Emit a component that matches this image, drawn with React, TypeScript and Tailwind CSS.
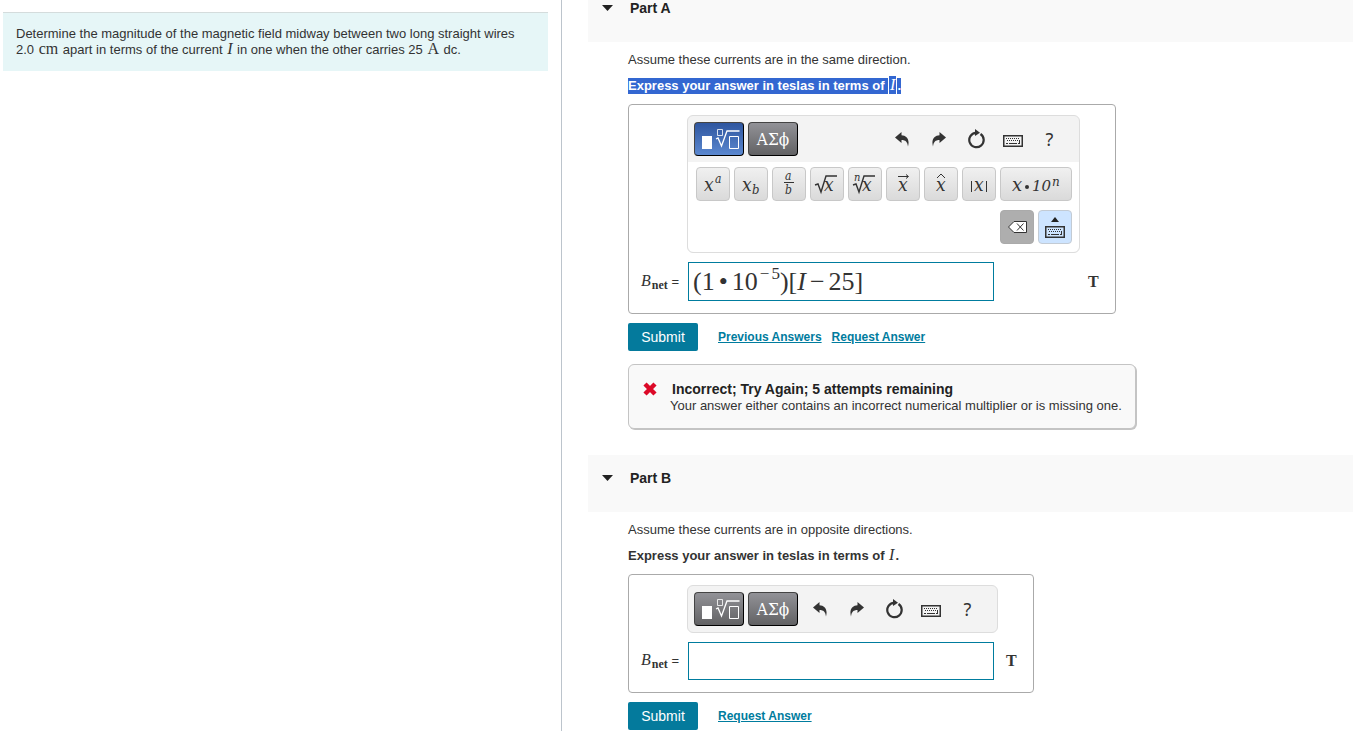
import type { ReactNode } from 'react'
import clsx from 'clsx'

const serif = "font-['Liberation_Serif',serif]"

export default function App() {
  return (
    <div className="flex min-h-screen bg-white font-['Liberation_Sans',Arial,sans-serif] text-[13px] leading-4 text-[#333]">
      <aside className="w-[562px] shrink-0 border-r border-[#bcc4cc] pl-[3px] pr-[13px] pt-3">
        <p className="border-t border-[#d4dcdc] bg-[#e6f6f7] p-[13px]">
          Determine the magnitude of the magnetic field midway between two long straight wires
          2.0 <Sym>cm</Sym> apart in terms of the current <Sym italic>I</Sym> in one when the other carries 25 <Sym>A</Sym> dc.
        </p>
      </aside>

      <main className="min-w-0 grow pl-[26px]">
        <section>
          <PartHeader title="Part A" first />
          <div className="pl-10 pt-[10px]">
            <p>Assume these currents are in the same direction.</p>
            <p className="mt-[10px] flex font-bold text-white">
              <span className="bg-[#3367d1]">Express your answer in teslas in terms of&nbsp;</span>
              <span className="-mt-0.5 border-l border-white bg-[#3367d1] pt-0.5"><Sym italic>I</Sym></span>
              <span className="border-l border-white bg-[#3367d1]">.</span>
            </p>
            <AnswerBox id="answer-a" toolbar={<Toolbar expanded />}>
              <div
                id="answer-a"
                role="textbox"
                aria-labelledby="answer-a-label"
                contentEditable
                suppressContentEditableWarning
                className={clsx(serif, 'flex h-[39px] w-[306px] items-center whitespace-nowrap border border-[#007c9e] pl-1 text-[26px] leading-9 outline-none')}
              >
                <span>(1</span>
                <span className="mx-1">•</span>
                <span>10</span>
                <sup className="top-0 mb-4 ml-0.5 text-[17px] leading-4">−<span className="ml-0.5">5</span></sup>
                <span>)[</span>
                <i>I</i>
                <span className="mx-1">−</span>
                <span>25]</span>
              </div>
            </AnswerBox>
            <Actions links={['Previous Answers', 'Request Answer']} />
            <Feedback />
          </div>
        </section>

        <section className="mt-[26px]">
          <PartHeader title="Part B" />
          <div className="pl-10 pt-[10px]">
            <p>Assume these currents are in opposite directions.</p>
            <p className="mt-[10px] font-bold">
              Express your answer in teslas in terms of <Sym italic>I</Sym>.
            </p>
            <AnswerBox id="answer-b" toolbar={<Toolbar />}>
              <input
                id="answer-b"
                type="text"
                aria-labelledby="answer-b-label"
                className={clsx(serif, 'block h-[38px] w-[306px] border border-[#007c9e] px-[3px] text-[26px] outline-none')}
              />
            </AnswerBox>
            <Actions links={['Request Answer']} />
          </div>
        </section>
      </main>
    </div>
  )
}

function Sym({ children, italic }: { children: ReactNode, italic?: boolean }) {
  return <span className={clsx(serif, 'px-px text-base leading-0 font-normal', italic && 'italic')}>{children}</span>
}

function PartHeader({ title, first }: { title: string, first?: boolean }) {
  return (
    <h2 className={clsx('bg-[#f9f9f9] pb-[26px] pl-[14px]', !first && 'pt-[15px]')}>
      <button className="flex items-center gap-[17px] text-sm leading-4 font-bold text-[#222]">
        <svg width="11" height="6" viewBox="0 0 11 6" fill="currentColor"><path d="M0 0h11L5.5 6z" /></svg>
        {title}
      </button>
    </h2>
  )
}

function AnswerBox({ id, toolbar, children }: { id: string, toolbar: ReactNode, children: ReactNode }) {
  return (
    <div className="mt-[10px] grid w-fit grid-cols-[46px_auto_20px] items-center gap-y-[9px] rounded border border-[#aaa] pb-3 pl-3 pr-[15px] pt-[10px]">
      <div className="col-start-2">{toolbar}</div>
      <label id={`${id}-label`} htmlFor={id} className="col-start-1 whitespace-nowrap">
        <span className={clsx(serif, 'text-base leading-0')}>
          <i>B</i>
          <sub className="bottom-0 ml-px align-[-3px] text-xs leading-0 font-bold">net</sub>
        </span>
        {' ='}
      </label>
      <div className="px-px">{children}</div>
      <span className={clsx(serif, 'pl-2 text-base leading-4 font-bold')}>T</span>
    </div>
  )
}

function Toolbar({ expanded }: { expanded?: boolean }) {
  return (
    <div className={clsx('rounded-md border border-[#ddd] bg-[#f3f3f3]', expanded ? 'w-[393px]' : 'w-[311px]')}>
      <div className="flex items-center py-1.5 pl-1.5 pr-[11px]">
        <ModeButton label="Templates" active={expanded}>
          <svg width="48" height="32" viewBox="0 0 48 32" fill="none" stroke="white">
            <path fill="white" stroke="none" d="M7 13h10v13H7z" />
            <path d="M22.5 6.500h5v6h-5z" opacity=".8" />
            <path strokeWidth="1.300" d="M21 16l2-1 3.500 8L32 8h12.500" />
            <path d="M34.500 13.500h9v12h-9z" />
          </svg>
        </ModeButton>
        <ModeButton label="Symbols">
          <span className="font-['DejaVu_Serif_Condensed','DejaVu_Serif',serif] text-[17px]">ΑΣϕ</span>
        </ModeButton>
        <div className="ml-auto flex">
          <Tool label="Undo"><ArrowIcon /></Tool>
          <Tool label="Redo"><ArrowIcon flip /></Tool>
          <Tool label="Reset">
            <svg width="18" height="20" viewBox="0 0 18 20">
              <path d="M13.500 5A7.200 7.200 0 1 1 9 3.800" fill="none" stroke="#333" strokeWidth="2.200" />
              <path d="M8 0l5 3.800-5 3.200z" fill="#333" />
            </svg>
          </Tool>
          <Tool label="Keyboard"><span className="pt-1"><KeyboardIcon /></span></Tool>
          <Tool label="Help"><span className="font-['Noto_Sans',sans-serif] text-lg leading-4">?</span></Tool>
        </div>
      </div>
      {expanded && <Palette />}
    </div>
  )
}

function ModeButton({ label, active, children }: { label: string, active?: boolean, children: ReactNode }) {
  return (
    <button
      aria-label={label}
      className={clsx(
        'mr-1 flex h-[34px] w-[50px] items-center justify-center rounded border border-b-black border-l-[#444] border-r-black border-t-[#444] bg-linear-to-b text-white last-of-type:mr-0',
        active ? 'from-[#2f569f] to-[#5b88d0]' : 'from-[#929297] to-[#626264]',
      )}
    >
      {children}
    </button>
  )
}

function Tool({ label, children }: { label: string, children: ReactNode }) {
  return (
    <button aria-label={label} className="flex h-[34px] w-[37px] items-center justify-center text-[#333]">
      {children}
    </button>
  )
}

function Palette() {
  return (
    <div className="rounded-b-md bg-white pb-2 pl-2 pr-[7px] pt-[5px]">
      <div className="flex gap-1">
        <Key label="Superscript">
          <text x="7" y="23" fontSize="19">x</text>
          <text x="18" y="15" fontSize="12">a</text>
        </Key>
        <Key label="Subscript">
          <text x="7" y="23" fontSize="19">x</text>
          <text x="17" y="26" fontSize="13">b</text>
        </Key>
        <Key label="Fraction">
          <text x="12" y="12" fontSize="12">a</text>
          <path d="M11 14.500h10" stroke="#333" />
          <text x="12" y="26" fontSize="12">b</text>
        </Key>
        <Key label="Square root">
          <path d="M4 17l3-1 3 8 5-16h11" fill="none" stroke="#333" strokeWidth="1.400" />
          <text x="13" y="23" fontSize="19">x</text>
        </Key>
        <Key label="Nth root">
          <path d="M4 17l3-1 3 8 5-16h11" fill="none" stroke="#333" strokeWidth="1.400" />
          <text x="5" y="13" fontSize="11">n</text>
          <text x="13" y="23" fontSize="19">x</text>
        </Key>
        <Key label="Vector">
          <path d="M11 8.500h10M19 6.500l2.500 2-2.500 2" fill="none" stroke="#333" />
          <text x="11" y="23" fontSize="19">x</text>
        </Key>
        <Key label="Hat">
          <path d="M12 10l4-4 4 4" fill="none" stroke="#333" />
          <text x="11" y="23" fontSize="19">x</text>
        </Key>
        <Key label="Absolute value">
          <path d="M8.500 13v11M23.500 13v11" stroke="#333" />
          <text x="11" y="23" fontSize="19">x</text>
        </Key>
        <Key label="Scientific notation" wide>
          <text x="11" y="23" fontSize="18">x</text>
          <circle cx="26" cy="19" r="2" />
          <text x="31" y="23" fontSize="15">10</text>
          <text x="51" y="18" fontSize="12">n</text>
        </Key>
      </div>
      <div className="mt-[9px] flex justify-end gap-1">
        <button aria-label="Delete" className="flex h-[34px] w-[34px] items-center justify-center rounded border border-[#aaa] bg-[#aeaeae]">
          <svg width="19" height="12" viewBox="0 0 19 12" fill="white" stroke="#333">
            <path d="M6 .5h12.500v11H6L.5 6z" />
            <path d="M9 2.500l6.500 7M15.500 2.500L9 9.500" />
          </svg>
        </button>
        <button aria-label="Hide palette" className="flex h-[34px] w-[34px] flex-col items-center justify-center gap-1 rounded border border-[#c3cbd4] bg-[#cde4ff]">
          <svg width="8" height="5" viewBox="0 0 8 5" fill="#222"><path d="M0 5l4-5 4 5z" /></svg>
          <KeyboardIcon />
        </button>
      </div>
    </div>
  )
}

function Key({ label, wide, children }: { label: string, wide?: boolean, children: ReactNode }) {
  return (
    <button
      aria-label={label}
      className={clsx(
        'h-[34px] rounded border border-[#c8c8c8] bg-linear-to-b from-[#f0f0f0] to-[#dadada]',
        wide ? "w-[72px] font-['DejaVu_Serif',serif]" : "w-[34px] font-['DejaVu_Serif_Condensed','DejaVu_Serif',serif]",
      )}
    >
      <svg viewBox={wide ? '0 0 70 32' : '0 0 32 32'} fill="#333" className="block h-8 w-full italic">
        {children}
      </svg>
    </button>
  )
}

function ArrowIcon({ flip }: { flip?: boolean }) {
  return (
    <svg width="14" height="15" viewBox="0 0 14 15" fill="#333" className={clsx(flip && '-scale-x-100')}>
      <path d="M0 5.500L6.500 0v3.200c5 .2 8.500 4 6.500 11.300-.5-4.500-2.500-6.500-6.500-6.500v3z" />
    </svg>
  )
}

function KeyboardIcon() {
  return (
    <svg width="20" height="12" viewBox="0 0 20 12" fill="none" stroke="#333">
      <path d="M.75.75h18.500v10.500H.75z" strokeWidth="1.500" />
      <path d="M3 3.500h14M4 5.500h11" strokeDasharray="1 1" />
      <path d="M3 8.500h2M6 8.500h8M15 8.500h2M16.500 5v3" />
    </svg>
  )
}

function Actions({ links }: { links: string[] }) {
  return (
    <div className="mt-[9px] flex items-center gap-[10px] text-xs font-bold text-[#007c9e]">
      <button className="mr-[10px] h-7 w-[70px] rounded-xs bg-[#047a9c] text-sm font-normal text-white">Submit</button>
      {links.map(l => (
        <a key={l} href="#" className="underline">{l}</a>
      ))}
    </div>
  )
}

function Feedback() {
  return (
    <div className="mt-[13px] flex w-fit gap-[13px] rounded-md border border-[#c4c4c4] bg-[#f9f9f9] pb-[14px] pl-[14px] pr-[13px] pt-4 shadow-[1px_1px_0_#c4c4c4]">
      <svg width="14" height="14" viewBox="0 0 14 14" stroke="#dc0a28" strokeWidth="4.500" className="mt-px">
        <path d="M2 2l10 10M12 2L2 12" />
      </svg>
      <div>
        <h3 className="mb-px pl-0.5 text-sm leading-4 font-bold text-[#222]">Incorrect; Try Again; 5 attempts remaining</h3>
        <p>Your answer either contains an incorrect numerical multiplier or is missing one.</p>
      </div>
    </div>
  )
}
